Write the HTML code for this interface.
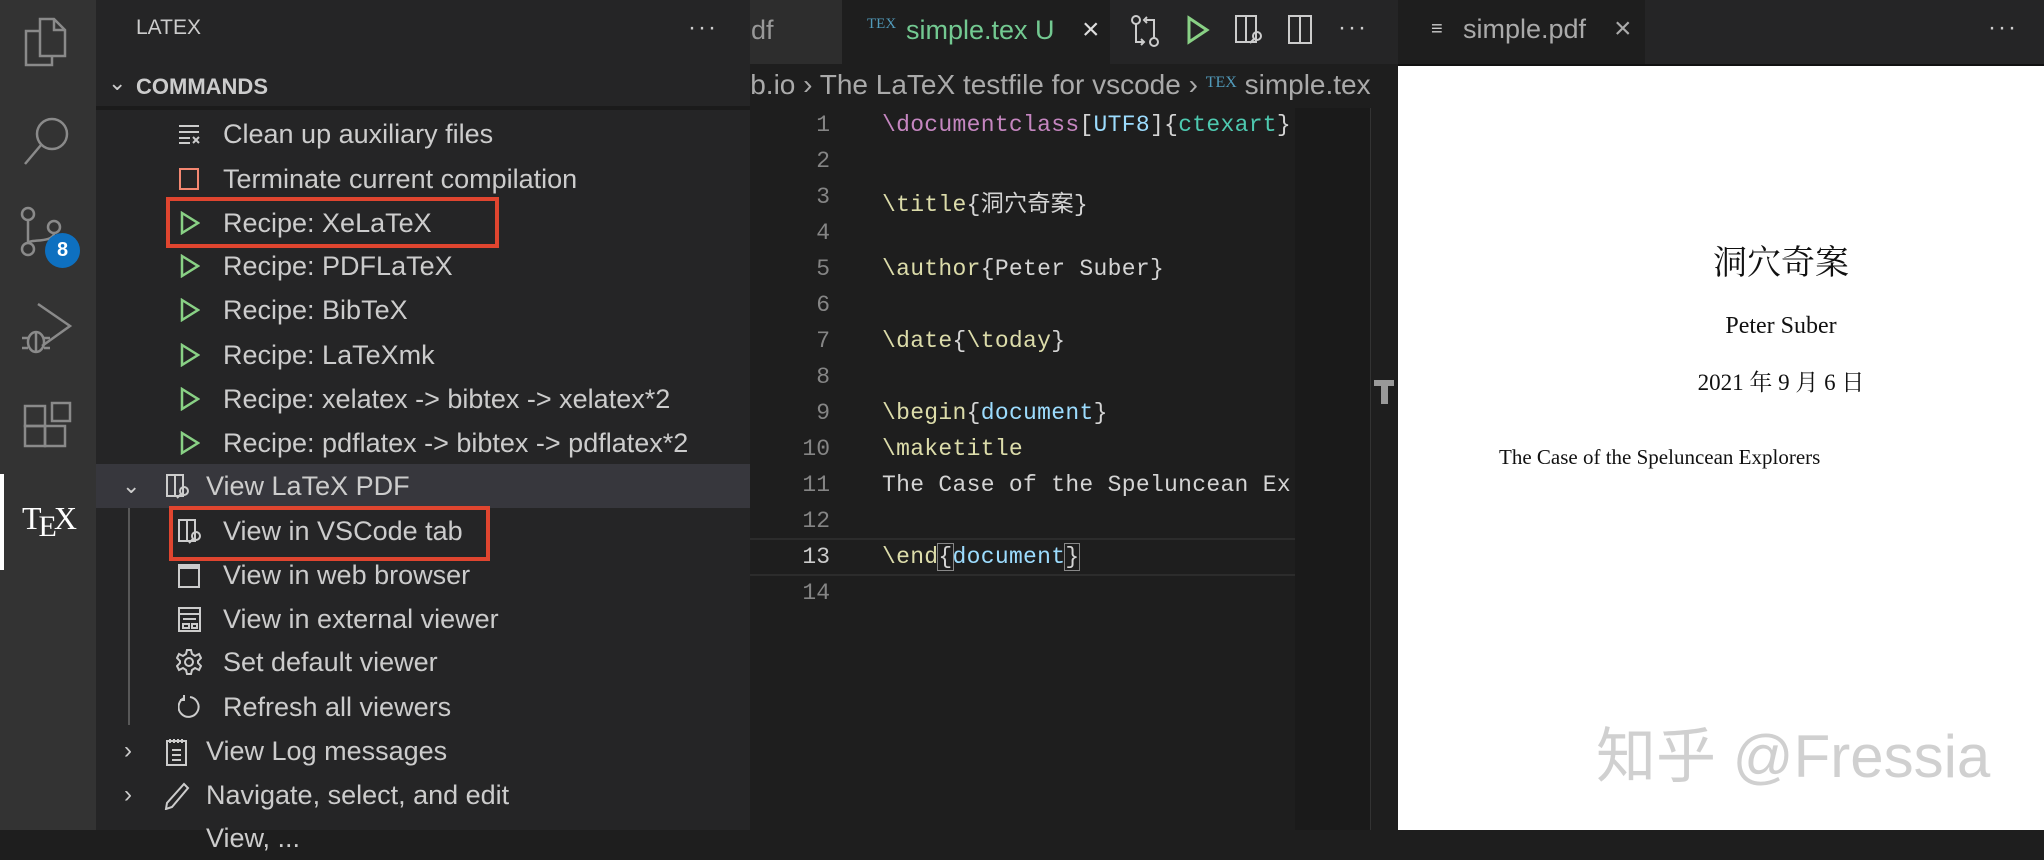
<!DOCTYPE html>
<html><head><meta charset="utf-8"><style>
*{margin:0;padding:0;box-sizing:border-box}
body{width:2044px;height:830px;overflow:hidden;background:#1e1e1e;font-family:"Liberation Sans","Noto Sans CJK SC",sans-serif;position:relative}
.abs{position:absolute}
#act{left:0;top:0;width:96px;height:830px;background:#333}
#side{left:96px;top:0;width:654px;height:830px;background:#252526}
.row{position:absolute;left:0;width:654px;height:44px;line-height:44px;font-size:27px;color:#ccc;white-space:nowrap}
.row .t{position:absolute;left:127px}
.row .t2{position:absolute;left:110px}
.ic{position:absolute}
#ed{left:750px;top:0;width:648px;height:830px;background:#1e1e1e;overflow:hidden}
.code{position:absolute;left:132px;font-family:"Liberation Mono","Noto Sans CJK SC",monospace;font-size:23px;color:#d4d4d4;white-space:pre;letter-spacing:0.3px}
.ln{position:absolute;width:80px;text-align:right;left:0;font-family:"Liberation Mono",monospace;font-size:23px;color:#858585}
#pdf{left:1398px;top:0;width:646px;height:830px;background:#fff}
</style></head><body>
<div id="act" class="abs">
 <svg class="ic" style="left:22px;top:16px" width="48" height="52" viewBox="0 0 48 52" fill="none" stroke="#8a8a8a" stroke-width="2.5"><path d="M18 3h14l11 11v26H18z M32 3v11h11"/><path d="M18 15H4v34h26V40"/></svg>
 <svg class="ic" style="left:20px;top:112px" width="56" height="56" viewBox="0 0 56 56" fill="none" stroke="#8a8a8a" stroke-width="2.5"><circle cx="32" cy="22" r="15"/><path d="M21 33L5 52"/></svg>
 <svg class="ic" style="left:20px;top:205px" width="60" height="60" viewBox="0 0 60 60" fill="none" stroke="#8a8a8a" stroke-width="2.5"><circle cx="8" cy="9" r="6"/><circle cx="8" cy="44" r="6"/><circle cx="34" cy="22" r="6"/><path d="M8 15v23M34 28c0 10-26 6-26 10"/></svg>
 <div class="abs" style="left:45px;top:233px;width:35px;height:35px;border-radius:50%;background:#0e70c0;color:#fff;font-weight:bold;font-size:20px;text-align:center;line-height:35px">8</div>
 <svg class="ic" style="left:18px;top:300px" width="60" height="60" viewBox="0 0 60 60" fill="none" stroke="#8a8a8a" stroke-width="2.5"><path d="M20 4l32 22-28 20"/><ellipse cx="18" cy="42" rx="8" ry="10"/><path d="M4 38h6M4 48h6M26 38h6M26 48h6M18 32v20"/></svg>
 <svg class="ic" style="left:22px;top:400px" width="52" height="52" viewBox="0 0 52 52" fill="none" stroke="#8a8a8a" stroke-width="2.5"><rect x="3" y="26" width="20" height="20"/><rect x="23" y="26" width="20" height="20"/><rect x="3" y="6" width="20" height="20"/><rect x="30" y="3" width="18" height="18"/></svg>
 <div class="abs" style="left:0;top:474px;width:4px;height:96px;background:#fff"></div>
 <div class="abs" style="left:22px;top:500px;color:#fff;font-family:'Liberation Serif',serif;font-size:32px">T<span style="position:relative;top:7px;font-size:30px;margin-left:-3px">E</span><span style="margin-left:-3px">X</span></div>
</div>
<div id="side" class="abs">
 <div class="abs" style="left:40px;top:16px;font-size:21px;color:#ccc">LATEX</div>
 <div class="abs" style="left:592px;top:14px;font-size:24px;color:#ccc;letter-spacing:2px">···</div>
 <div class="abs" style="left:12px;top:70px;font-size:22px;color:#ccc">&#8964;</div>
 <div class="abs" style="left:40px;top:74px;font-size:22px;font-weight:bold;color:#ccc">COMMANDS</div>
 <div class="abs" style="left:0;top:106px;width:654px;height:4px;background:#1b1b1b"></div>

 <div class="row" style="top:112px"><svg class="ic" style="left:82px;top:12px" width="24" height="20" fill="none" stroke="#ccc" stroke-width="2"><path d="M1 2h20M1 8h20M1 14h11M1 19h11M15 13l6 6M21 13l-6 6"/></svg><span class="t">Clean up auxiliary files</span></div>
 <div class="row" style="top:157px"><div class="ic" style="left:83px;top:11px;width:20px;height:22px;border:2.5px solid #f48771"></div><span class="t">Terminate current compilation</span></div>
 <div class="row" style="top:201px"><svg class="ic" style="left:84px;top:10px" width="20" height="24" fill="none" stroke="#89d185" stroke-width="2.5"><path d="M2 2l16 10-16 10z"/></svg><span class="t">Recipe: XeLaTeX</span></div>
 <div class="row" style="top:244px"><svg class="ic" style="left:84px;top:10px" width="20" height="24" fill="none" stroke="#89d185" stroke-width="2.5"><path d="M2 2l16 10-16 10z"/></svg><span class="t">Recipe: PDFLaTeX</span></div>
 <div class="row" style="top:288px"><svg class="ic" style="left:84px;top:10px" width="20" height="24" fill="none" stroke="#89d185" stroke-width="2.5"><path d="M2 2l16 10-16 10z"/></svg><span class="t">Recipe: BibTeX</span></div>
 <div class="row" style="top:333px"><svg class="ic" style="left:84px;top:10px" width="20" height="24" fill="none" stroke="#89d185" stroke-width="2.5"><path d="M2 2l16 10-16 10z"/></svg><span class="t">Recipe: LaTeXmk</span></div>
 <div class="row" style="top:377px"><svg class="ic" style="left:84px;top:10px" width="20" height="24" fill="none" stroke="#89d185" stroke-width="2.5"><path d="M2 2l16 10-16 10z"/></svg><span class="t">Recipe: xelatex -&gt; bibtex -&gt; xelatex*2</span></div>
 <div class="row" style="top:421px"><svg class="ic" style="left:84px;top:10px" width="20" height="24" fill="none" stroke="#89d185" stroke-width="2.5"><path d="M2 2l16 10-16 10z"/></svg><span class="t">Recipe: pdflatex -&gt; bibtex -&gt; pdflatex*2</span></div>
 <div class="row" style="top:464px;background:#37373d"><span class="ic" style="left:26px;top:0;font-size:22px">&#8964;</span><svg class="ic" style="left:70px;top:10px" width="24" height="26" fill="none" stroke="#ccc" stroke-width="2"><rect x="1" y="1" width="16" height="21"/><path d="M9 1v21"/><circle cx="18" cy="17" r="4"/><path d="M15 20l-4 4"/></svg><span class="t2">View LaTeX PDF</span></div>
 <div class="abs" style="left:32px;top:508px;width:2px;height:217px;background:#585858"></div>
 <div class="row" style="top:509px"><svg class="ic" style="left:82px;top:10px" width="24" height="26" fill="none" stroke="#ccc" stroke-width="2"><rect x="1" y="1" width="16" height="21"/><path d="M9 1v21"/><circle cx="18" cy="17" r="4"/><path d="M15 20l-4 4"/></svg><span class="t">View in VSCode tab</span></div>
 <div class="row" style="top:553px"><div class="ic" style="left:82px;top:11px;width:22px;height:24px;border:2px solid #ccc;border-top-width:5px"></div><span class="t">View in web browser</span></div>
 <div class="row" style="top:597px"><svg class="ic" style="left:82px;top:10px" width="24" height="26" fill="none" stroke="#ccc" stroke-width="2"><rect x="1" y="1" width="21" height="23"/><path d="M1 7h21M5 12h13M5 17h6v4H5zM14 17h5v4h-5z"/></svg><span class="t">View in external viewer</span></div>
 <div class="row" style="top:640px"><svg class="ic" style="left:80px;top:9px" width="26" height="26" fill="none" stroke="#ccc" stroke-width="2"><circle cx="13" cy="13" r="4"/><path d="M11 1h4l1 4 3 2 4-2 2 4-3 3v2l3 3-2 4-4-2-3 2-1 4h-4l-1-4-3-2-4 2-2-4 3-3v-2L1 9l2-4 4 2 3-2z"/></svg><span class="t">Set default viewer</span></div>
 <div class="row" style="top:685px"><svg class="ic" style="left:82px;top:9px" width="24" height="26" fill="none" stroke="#ccc" stroke-width="2"><path d="M6 4a10 10 0 1 0 6-1M6 1v5H2"/></svg><span class="t">Refresh all viewers</span></div>
 <div class="row" style="top:729px"><span class="ic" style="left:28px;top:0;font-size:24px">&#8250;</span><svg class="ic" style="left:70px;top:9px" width="22" height="28" fill="none" stroke="#ccc" stroke-width="2"><rect x="1" y="3" width="19" height="24"/><path d="M4 1v4M8 1v4M12 1v4M16 1v4M6 12h9M6 17h9M6 22h9"/></svg><span class="t2">View Log messages</span></div>
 <div class="row" style="top:773px"><span class="ic" style="left:28px;top:0;font-size:24px">&#8250;</span><svg class="ic" style="left:68px;top:9px" width="26" height="28" fill="none" stroke="#ccc" stroke-width="2"><path d="M20 2l4 4L8 25l-6 2 1-6z"/></svg><span class="t2">Navigate, select, and edit</span></div>
 <div class="row" style="top:816px"><span class="t2">View, ...</span></div>
 <div class="abs" style="left:70px;top:197px;width:333px;height:51px;border:4px solid #e0452f"></div>
 <div class="abs" style="left:73px;top:506px;width:321px;height:55px;border:4px solid #e0452f"></div>
</div>
<div id="ed" class="abs">
 <div class="abs" style="left:0;top:0;width:648px;height:64px;background:#252526"></div>
 <div class="abs" style="left:0;top:0;width:92px;height:64px;background:#2d2d2d;color:#999;font-size:27px;line-height:60px;overflow:hidden"><span style="position:absolute;left:-14px">pdf</span></div>
 <div class="abs" style="left:92px;top:0;width:268px;height:64px;background:#1e1e1e;font-size:27px;line-height:60px;white-space:nowrap"><span style="position:absolute;left:25px;top:-6px;font-family:'Liberation Serif',serif;font-size:15px;color:#519aba">TEX</span><span style="position:absolute;left:64px;color:#73c991">simple.tex U</span><span style="position:absolute;left:240px;color:#ddd;font-size:30px">×</span></div>
 <svg class="abs" style="left:380px;top:14px" width="30" height="34" fill="none" stroke="#ccc" stroke-width="2"><circle cx="6" cy="6" r="4"/><circle cx="24" cy="28" r="4"/><path d="M6 10v18h8M24 24V6h-8M17 3l-3 3 3 3M11 25l3 3-3 3"/></svg>
 <svg class="abs" style="left:436px;top:15px" width="24" height="30" fill="none" stroke="#89d185" stroke-width="3"><path d="M3 3l18 12L3 27z"/></svg>
 <svg class="abs" style="left:485px;top:14px" width="30" height="34" fill="none" stroke="#ccc" stroke-width="2"><rect x="1" y="2" width="20" height="26"/><path d="M11 2v26"/><circle cx="22" cy="22" r="4"/><path d="M19 25l-4 4"/></svg>
 <svg class="abs" style="left:538px;top:14px" width="26" height="32" fill="none" stroke="#ccc" stroke-width="2"><rect x="1" y="2" width="22" height="27"/><path d="M12 2v27"/></svg>
 <div class="abs" style="left:588px;top:14px;font-size:24px;color:#ccc;letter-spacing:2px">···</div>
 <div class="abs" style="left:-6px;top:69px;font-size:28px;color:#aaa;white-space:nowrap">ib.io &#8250; The LaTeX testfile for vscode &#8250; <span style="font-family:'Liberation Serif',serif;font-size:16px;color:#519aba;vertical-align:7px">TEX</span> simple.tex</div>
 <div class="abs" style="left:545px;top:108px;width:75px;height:722px;background:#1a1a1a"></div>
 <div class="abs" style="left:620px;top:108px;width:28px;height:722px;background:#1e1e1e;border-left:1px solid #333"></div>
 <div class="abs" style="left:624px;top:380px;width:20px;height:24px;border-top:6px solid #999"><div style="margin:0 auto;width:7px;height:18px;background:#999"></div></div>
 <div class="abs" style="left:0;top:538px;width:545px;height:38px;border-top:2px solid #2c2c2c;border-bottom:2px solid #2c2c2c"></div>
 <div class="ln" style="top:112px">1</div><div class="ln" style="top:148px">2</div><div class="ln" style="top:184px">3</div><div class="ln" style="top:220px">4</div><div class="ln" style="top:256px">5</div><div class="ln" style="top:292px">6</div><div class="ln" style="top:328px">7</div><div class="ln" style="top:364px">8</div><div class="ln" style="top:400px">9</div><div class="ln" style="top:436px">10</div><div class="ln" style="top:472px">11</div><div class="ln" style="top:508px">12</div><div class="ln" style="top:544px;color:#ccc">13</div><div class="ln" style="top:580px">14</div>
 <div class="code" style="top:112px"><span style="color:#c586c0">\documentclass</span>[<span style="color:#9cdcfe">UTF8</span>]{<span style="color:#4ec9b0">ctexart</span>}</div>
 <div class="code" style="top:184px"><span style="color:#dcdcaa">\title</span>{洞穴奇案}</div>
 <div class="code" style="top:256px"><span style="color:#dcdcaa">\author</span>{Peter Suber}</div>
 <div class="code" style="top:328px"><span style="color:#dcdcaa">\date</span>{<span style="color:#dcdcaa">\today</span>}</div>
 <div class="code" style="top:400px"><span style="color:#dcdcaa">\begin</span>{<span style="color:#9cdcfe">document</span>}</div>
 <div class="code" style="top:436px"><span style="color:#dcdcaa">\maketitle</span></div>
 <div class="code" style="top:472px">The Case of the Speluncean Ex</div>
 <div class="code" style="top:544px"><span style="color:#dcdcaa">\end</span><span style="outline:1px solid #888">{</span><span style="color:#9cdcfe">document</span><span style="outline:1px solid #888">}</span></div>
</div>
<div id="pdf" class="abs">
 <div class="abs" style="left:0;top:0;width:646px;height:64px;background:#252526"></div>
 <div class="abs" style="left:0;top:0;width:247px;height:64px;background:#1e1e1e;font-size:27px;color:#aaa;line-height:58px;white-space:nowrap"><span style="position:absolute;left:33px;font-size:20px;color:#ccc">&#8801;</span><span style="position:absolute;left:65px">simple.pdf</span><span style="position:absolute;left:216px;font-size:30px">×</span></div>
 <div class="abs" style="left:590px;top:14px;font-size:24px;color:#ccc;letter-spacing:2px">···</div>
 <div class="abs" style="left:0;top:64px;width:646px;height:2px;background:#111"></div>
 <div class="abs" style="left:0;top:235px;width:766px;text-align:center;font-family:'Liberation Serif','Noto Serif CJK SC',serif;font-size:34px;color:#111">洞穴奇案</div>
 <div class="abs" style="left:0;top:313px;width:766px;text-align:center;font-family:'Liberation Serif',serif;font-size:24px;color:#111">Peter Suber</div>
 <div class="abs" style="left:0;top:364px;width:766px;text-align:center;font-family:'Liberation Serif','Noto Serif CJK SC',serif;font-size:23px;color:#111">2021 年 9 月 6 日</div>
 <div class="abs" style="left:101px;top:445px;font-family:'Liberation Serif',serif;font-size:21px;color:#111">The Case of the Speluncean Explorers</div>
 <div class="abs" style="left:198px;top:708px;font-size:60px;color:#d0d0d0;white-space:nowrap;font-family:'Liberation Sans','Noto Sans CJK SC',sans-serif">知乎 @Fressia</div>
</div>
</body></html>
